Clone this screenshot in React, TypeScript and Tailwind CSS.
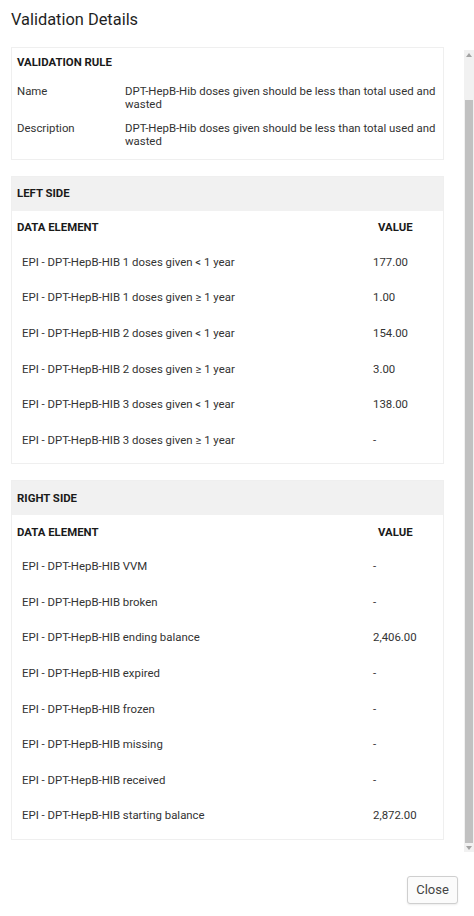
import React from "react";

const left: [string, string][] = [
  ["EPI - DPT-HepB-HIB 1 doses given < 1 year", "177.00"],
  ["EPI - DPT-HepB-HIB 1 doses given \u2265 1 year", "1.00"],
  ["EPI - DPT-HepB-HIB 2 doses given < 1 year", "154.00"],
  ["EPI - DPT-HepB-HIB 2 doses given \u2265 1 year", "3.00"],
  ["EPI - DPT-HepB-HIB 3 doses given < 1 year", "138.00"],
  ["EPI - DPT-HepB-HIB 3 doses given \u2265 1 year", "-"],
];

const right: [string, string][] = [
  ["EPI - DPT-HepB-HIB VVM", "-"],
  ["EPI - DPT-HepB-HIB broken", "-"],
  ["EPI - DPT-HepB-HIB ending balance", "2,406.00"],
  ["EPI - DPT-HepB-HIB expired", "-"],
  ["EPI - DPT-HepB-HIB frozen", "-"],
  ["EPI - DPT-HepB-HIB missing", "-"],
  ["EPI - DPT-HepB-HIB received", "-"],
  ["EPI - DPT-HepB-HIB starting balance", "2,872.00"],
];

function SideCard({ title, rows }: { title: string; rows: [string, string][] }) {
  return (
    <div className="border border-[#efefef] pb-[5px]">
      <div className="h-[34px] flex items-center pl-[5px] bg-[#f1f1f1] text-[11.4px] font-bold text-[#1a1a1a]">
        {title}
      </div>
      <div className="h-[34px] flex items-center text-[11.4px] font-bold text-[#1a1a1a]">
        <div className="w-[361px] shrink-0 pl-[5px]">DATA ELEMENT</div>
        <div className="pl-[5px]">VALUE</div>
      </div>
      {rows.map(([n, v], i) => (
        <div key={i} className="h-[35.6px] flex items-center text-[11.4px] text-[#333]">
          <div className="w-[361px] shrink-0 pl-[10px]">{n}</div>
          <div>{v}</div>
        </div>
      ))}
    </div>
  );
}

export default function App() {
  return (
    <div className="w-[474px] h-[916px] bg-white flex flex-col font-['Roboto',sans-serif] text-[#333] overflow-hidden">
      <div className="h-[47px] shrink-0 pl-[11px] pt-[8px] text-[16.4px] leading-[24px] text-[#1f1f1f]">
        Validation Details
      </div>
      <div className="flex h-[815px] shrink-0">
        <div className="w-[464px] shrink-0 pl-[11px] pr-[20px]">
          <div className="border border-[#efefef] pt-[6px] pb-[11px] pl-[5px]">
            <div className="text-[11.4px] leading-[16px] font-bold text-[#1a1a1a]">VALIDATION RULE</div>
            <div className="mt-[14.5px] grid grid-cols-[108px_312px] text-[11.4px] leading-[13px] text-[#333]">
              <div>Name</div>
              <div>DPT-HepB-Hib doses given should be less than total used and wasted</div>
            </div>
            <div className="mt-[11px] grid grid-cols-[108px_312px] text-[11.4px] leading-[13px] text-[#333]">
              <div>Description</div>
              <div>DPT-HepB-Hib doses given should be less than total used and wasted</div>
            </div>
          </div>
          <div className="mt-[16px]">
            <SideCard title="LEFT SIDE" rows={left} />
          </div>
          <div className="mt-[16px]">
            <SideCard title="RIGHT SIDE" rows={right} />
          </div>
        </div>
        <div className="w-[10px] shrink-0 mt-[3px] h-[802px] bg-[#f1f1f1] flex flex-col">
          <div className="h-[10px] flex items-center justify-center">
            <svg width="6" height="4" viewBox="0 0 6 4"><path d="M0 4 L3 0 L6 4 Z" fill="#a3a3a3" /></svg>
          </div>
          <div className="h-[40px]" />
          <div className="h-[743px] mx-[1px] bg-[#c1c1c1]" />
          <div className="h-[9px] flex items-center justify-center">
            <svg width="6" height="4" viewBox="0 0 6 4"><path d="M0 0 L6 0 L3 4 Z" fill="#a3a3a3" /></svg>
          </div>
        </div>
      </div>
      <div className="flex justify-end pr-[16px] pt-[14px]">
        <button className="h-[28px] w-[51px] border border-[#cfcfcf] rounded-[3px] bg-[#fbfbfb] text-[13px] text-[#444] shadow-[0_1px_2px_rgba(0,0,0,0.08)]">
          Close
        </button>
      </div>
    </div>
  );
}
